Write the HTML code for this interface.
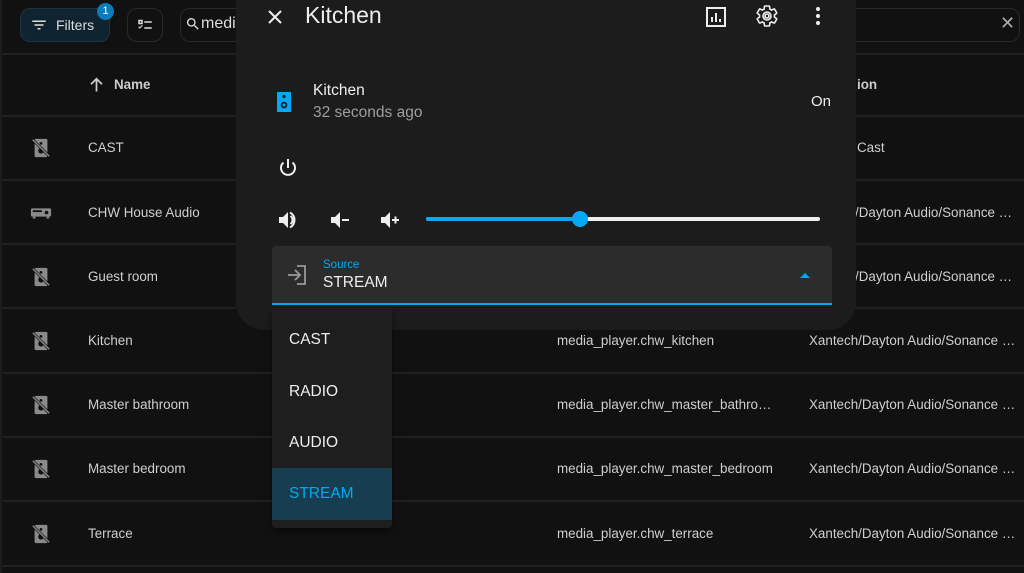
<!DOCTYPE html>
<html><head><meta charset="utf-8"><style>
*{margin:0;padding:0;box-sizing:border-box}
body{width:1024px;height:573px;overflow:hidden;background:#111;font-family:"Liberation Sans",sans-serif;color:#e1e1e1;position:relative}
.a{position:absolute}
.line{position:absolute;left:2px;right:0;height:2px;background:#202020}
.t{position:absolute;font-size:13.4px;color:#cfcfcf;white-space:nowrap}
.ico{position:absolute;left:30px}
</style></head><body>
<div class="a" style="left:0;top:0;width:2px;height:573px;background:#1c1c1c"></div>
<div class="a" style="left:20px;top:8px;width:90px;height:34px;border-radius:10px;background:#0f2430;border:1px solid #1f3440"></div>
<svg class="a" style="left:30px;top:16px" width="18" height="18" viewBox="0 0 24 24"><path d="M6 13h12v-2H6M3 6v2h18V6M10 18h4v-2h-4z" fill="#ddd"/></svg>
<div class="t" style="left:56px;top:17px;font-size:14px;color:#ddd">Filters</div>
<div class="a" style="left:97px;top:3px;width:17px;height:17px;border-radius:50%;background:#0b7ab8;color:#fff;font-size:11px;text-align:center;line-height:17px">1</div>
<div class="a" style="left:127px;top:8px;width:36px;height:34px;border-radius:10px;border:1px solid #2a2a2a"></div>
<svg class="a" style="left:136px;top:16px" width="18" height="18" viewBox="0 0 24 24"><path d="M3 5h6v6H3zm2 2v2h2V7zm6 0h10v2H11zm0 8h10v2H11zm-6 2l-2-2 1-1 1 1 3-3 1 1z" fill="#ddd"/></svg>
<div class="a" style="left:180px;top:8px;width:840px;height:34px;border-radius:10px;border:1px solid #2a2a2a"></div>
<svg class="a" style="left:185px;top:16px" width="16" height="16" viewBox="0 0 24 24"><path d="M9.5 3A6.5 6.5 0 0 1 16 9.5c0 1.6-.6 3.1-1.6 4.2l.3.3h.8l5 5-1.5 1.5-5-5v-.8l-.3-.3A6.5 6.5 0 1 1 9.5 3m0 2a4.5 4.5 0 1 0 0 9 4.5 4.5 0 0 0 0-9" fill="#ddd"/></svg>
<div class="t" style="left:201px;top:15px;font-size:16px;color:#ddd">media</div>
<div class="t" style="left:1000px;top:13px;font-size:18px;color:#aaa">✕</div>
<div class="a" style="left:2px;right:0;top:53px;height:2px;background:#202020"></div>
<svg class="a" style="left:86px;top:74px" width="21" height="21" viewBox="0 0 24 24"><path d="M12 4l-7 7 1.4 1.4L11 7.8V20h2V7.8l4.6 4.6L19 11z" fill="#ccc"/></svg>
<div class="t" style="left:114px;top:77px;font-weight:bold;color:#ccc">Name</div>
<div class="t" style="left:857px;top:77px;font-weight:bold;color:#ccc">ion</div>
<div class="line" style="top:115px"></div>
<div class="line" style="top:179px"></div>
<div class="line" style="top:243px"></div>
<div class="line" style="top:307px"></div>
<div class="line" style="top:372px"></div>
<div class="line" style="top:436px"></div>
<div class="line" style="top:500px"></div>
<div class="line" style="top:565px"></div>
<div class="t" style="left:88px;top:140px">CAST</div>
<div class="t" style="left:88px;top:205px">CHW House Audio</div>
<div class="t" style="left:88px;top:269px">Guest room</div>
<div class="t" style="left:88px;top:333px">Kitchen</div>
<div class="t" style="left:88px;top:397px">Master bathroom</div>
<div class="t" style="left:88px;top:461px">Master bedroom</div>
<div class="t" style="left:88px;top:526px">Terrace</div>
<div class="t" style="left:557px;top:333px">media_player.chw_kitchen</div>
<div class="t" style="left:557px;top:397px">media_player.chw_master_bathro…</div>
<div class="t" style="left:557px;top:461px">media_player.chw_master_bedroom</div>
<div class="t" style="left:557px;top:526px">media_player.chw_terrace</div>
<div class="t" style="left:857px;top:140px">Cast</div>
<div class="t" style="left:855px;top:205px">/Dayton Audio/Sonance …</div>
<div class="t" style="left:855px;top:269px">/Dayton Audio/Sonance …</div>
<div class="t" style="left:809px;top:333px">Xantech/Dayton Audio/Sonance …</div>
<div class="t" style="left:809px;top:397px">Xantech/Dayton Audio/Sonance …</div>
<div class="t" style="left:809px;top:461px">Xantech/Dayton Audio/Sonance …</div>
<div class="t" style="left:809px;top:526px">Xantech/Dayton Audio/Sonance …</div>
<svg class="ico" style="top:137px" width="22" height="22" viewBox="0 0 24 24"><rect x="5" y="2" width="14" height="20" rx="1.5" fill="#8a8a8a"/><circle cx="12" cy="15" r="3" fill="#111"/><circle cx="12" cy="7" r="1.5" fill="#111"/><path d="M3 3l18 18" stroke="#111" stroke-width="3"/><path d="M3 3l18 18" stroke="#8a8a8a" stroke-width="1.5"/></svg>
<svg class="ico" style="top:202px" width="22" height="22" viewBox="0 0 24 24"><rect x="1" y="7" width="22" height="9" rx="1.5" fill="#8a8a8a"/><rect x="3" y="9" width="10" height="2" fill="#111"/><circle cx="18" cy="11.5" r="2" fill="#111"/><rect x="3" y="16" width="3" height="2" fill="#8a8a8a"/><rect x="18" y="16" width="3" height="2" fill="#8a8a8a"/></svg>
<svg class="ico" style="top:266px" width="22" height="22" viewBox="0 0 24 24"><rect x="5" y="2" width="14" height="20" rx="1.5" fill="#8a8a8a"/><circle cx="12" cy="15" r="3" fill="#111"/><circle cx="12" cy="7" r="1.5" fill="#111"/><path d="M3 3l18 18" stroke="#111" stroke-width="3"/><path d="M3 3l18 18" stroke="#8a8a8a" stroke-width="1.5"/></svg>
<svg class="ico" style="top:330px" width="22" height="22" viewBox="0 0 24 24"><rect x="5" y="2" width="14" height="20" rx="1.5" fill="#8a8a8a"/><circle cx="12" cy="15" r="3" fill="#111"/><circle cx="12" cy="7" r="1.5" fill="#111"/><path d="M3 3l18 18" stroke="#111" stroke-width="3"/><path d="M3 3l18 18" stroke="#8a8a8a" stroke-width="1.5"/></svg>
<svg class="ico" style="top:394px" width="22" height="22" viewBox="0 0 24 24"><rect x="5" y="2" width="14" height="20" rx="1.5" fill="#8a8a8a"/><circle cx="12" cy="15" r="3" fill="#111"/><circle cx="12" cy="7" r="1.5" fill="#111"/><path d="M3 3l18 18" stroke="#111" stroke-width="3"/><path d="M3 3l18 18" stroke="#8a8a8a" stroke-width="1.5"/></svg>
<svg class="ico" style="top:458px" width="22" height="22" viewBox="0 0 24 24"><rect x="5" y="2" width="14" height="20" rx="1.5" fill="#8a8a8a"/><circle cx="12" cy="15" r="3" fill="#111"/><circle cx="12" cy="7" r="1.5" fill="#111"/><path d="M3 3l18 18" stroke="#111" stroke-width="3"/><path d="M3 3l18 18" stroke="#8a8a8a" stroke-width="1.5"/></svg>
<svg class="ico" style="top:523px" width="22" height="22" viewBox="0 0 24 24"><rect x="5" y="2" width="14" height="20" rx="1.5" fill="#8a8a8a"/><circle cx="12" cy="15" r="3" fill="#111"/><circle cx="12" cy="7" r="1.5" fill="#111"/><path d="M3 3l18 18" stroke="#111" stroke-width="3"/><path d="M3 3l18 18" stroke="#8a8a8a" stroke-width="1.5"/></svg>
<div class="a" style="left:236px;top:-30px;width:620px;height:360px;background:#1c1c1c;border-radius:28px"></div>
<svg class="a" style="left:263px;top:5px" width="24" height="24" viewBox="0 0 24 24"><path d="M6 6l12 12M18 6L6 18" stroke="#eee" stroke-width="2"/></svg>
<div class="t" style="left:305px;top:2px;font-size:23px;color:#eee">Kitchen</div>
<svg class="a" style="left:704px;top:5px" width="24" height="24" viewBox="0 0 24 24"><rect x="3" y="3" width="18" height="18" fill="none" stroke="#eee" stroke-width="2"/><path d="M8 17v-5M12 17V8M16 17v-3" stroke="#eee" stroke-width="2"/></svg>
<svg class="a" style="left:755px;top:4px" width="24" height="24" viewBox="0 0 24 24"><path d="M12 8a4 4 0 1 0 0 8 4 4 0 0 0 0-8m0 2a2 2 0 1 1 0 4 2 2 0 0 1 0-4m-2 12c-.25 0-.46-.18-.5-.42l-.37-2.650c-.63-.25-1.17-.59-1.690-.99l-2.490 1.010c-.22.08-.49 0-.61-.22l-2-3.460a.49.49 0 0 1 .12-.64l2.110-1.660L4.500 12l.07-1-2.110-1.630a.49.49 0 0 1-.12-.64l2-3.460c.12-.22.39-.31.61-.22l2.490 1c.52-.39 1.060-.73 1.690-.98l.37-2.650c.04-.24.25-.42.5-.42h4c.25 0 .46.18.5.42l.37 2.650c.63.25 1.170.59 1.690.98l2.490-1c.22-.09.49 0 .61.22l2 3.460c.13.22.07.49-.12.64L19.430 11l.07 1-.07 1 2.110 1.630c.19.15.25.42.12.64l-2 3.460c-.12.22-.39.31-.61.22l-2.490-1c-.52.39-1.060.73-1.690.98l-.37 2.650c-.04.24-.25.42-.5.42z" fill="none" stroke="#eee" stroke-width="1.6"/></svg>
<svg class="a" style="left:806px;top:4px" width="24" height="24" viewBox="0 0 24 24"><circle cx="12" cy="5" r="2" fill="#eee"/><circle cx="12" cy="12" r="2" fill="#eee"/><circle cx="12" cy="19" r="2" fill="#eee"/></svg>
<svg class="a" style="left:272px;top:90px" width="24" height="24" viewBox="0 0 24 24"><rect x="5" y="2" width="14" height="20" rx="1" fill="#03a9f4"/><circle cx="12" cy="15" r="3.3" fill="#1c1c1c"/><circle cx="12" cy="15" r="1.5" fill="#03a9f4"/><circle cx="12" cy="6.5" r="1.6" fill="#1c1c1c"/></svg>
<div class="t" style="left:313px;top:82px;font-size:15.5px;color:#eee">Kitchen</div>
<div class="t" style="left:313px;top:104px;font-size:15.5px;color:#9e9e9e">32 seconds ago</div>
<div class="t" style="left:811px;top:93px;font-size:15px;color:#eee">On</div>
<svg class="a" style="left:276px;top:156px" width="24" height="24" viewBox="0 0 24 24"><path d="M12 3v9" stroke="#eee" stroke-width="2"/><path d="M7.5 6.5a7 7 0 1 0 9 0" fill="none" stroke="#eee" stroke-width="2"/></svg>
<svg class="a" style="left:276px;top:208px" width="24" height="24" viewBox="0 0 24 24"><path d="M3 9v6h4l5 5V4L7 9z" fill="#eee"/><path d="M14.5 8a5 5 0 0 1 0 8M14 4.5a8.5 8.5 0 0 1 0 15" fill="none" stroke="#eee" stroke-width="2"/></svg>
<svg class="a" style="left:328px;top:208px" width="24" height="24" viewBox="0 0 24 24"><path d="M3 9v6h4l5 5V4L7 9z" fill="#eee"/><path d="M14 12h7" stroke="#eee" stroke-width="2"/></svg>
<svg class="a" style="left:378px;top:208px" width="24" height="24" viewBox="0 0 24 24"><path d="M3 9v6h4l5 5V4L7 9z" fill="#eee"/><path d="M14 12h7M17.5 8.5v7" stroke="#eee" stroke-width="2"/></svg>
<div class="a" style="left:426px;top:217px;width:394px;height:4px;border-radius:2px;background:#eee"></div>
<div class="a" style="left:426px;top:217px;width:154px;height:4px;border-radius:2px;background:#03a9f4"></div>
<div class="a" style="left:572px;top:211px;width:16px;height:16px;border-radius:50%;background:#03a9f4"></div>
<div class="a" style="left:272px;top:246px;width:560px;height:59px;background:#2c2c2c;border-radius:4px 4px 0 0;border-bottom:2px solid #03a9f4"></div>
<svg class="a" style="left:285px;top:263px" width="24" height="24" viewBox="0 0 24 24"><path d="M10 17l5-5-5-5M15 12H3" fill="none" stroke="#9a9a9a" stroke-width="1.8"/><path d="M12 3h8v18h-8" fill="none" stroke="#9a9a9a" stroke-width="1.8"/></svg>
<div class="t" style="left:323px;top:259px;font-size:11.5px;color:#03a9f4">Source</div>
<div class="t" style="left:323px;top:274px;font-size:15.5px;color:#eee">STREAM</div>
<div class="a" style="left:800px;top:273px;width:0;height:0;border-left:5px solid transparent;border-right:5px solid transparent;border-bottom:5px solid #03a9f4"></div>
<div class="a" style="left:272px;top:308px;width:120px;height:220px;background:#1e1e1e;border-radius:0 0 4px 4px;box-shadow:0 4px 8px rgba(0,0,0,.5)"></div>
<div class="t" style="left:289px;top:331px;font-size:15.5px;color:#eee">CAST</div>
<div class="t" style="left:289px;top:383px;font-size:15.5px;color:#eee">RADIO</div>
<div class="t" style="left:289px;top:434px;font-size:15.5px;color:#eee">AUDIO</div>
<div class="a" style="left:272px;top:468px;width:120px;height:52px;background:#173d50"></div>
<div class="t" style="left:289px;top:485px;font-size:15.5px;color:#03a9f4">STREAM</div>
</body></html>
